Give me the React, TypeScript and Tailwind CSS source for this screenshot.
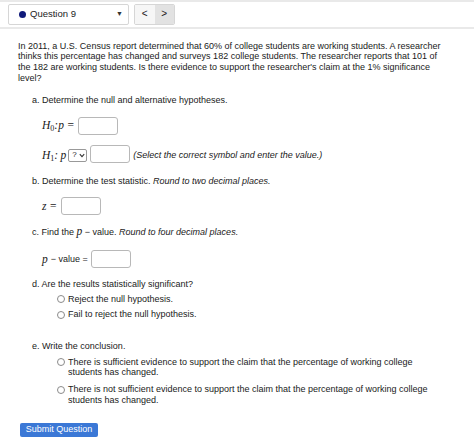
import React from "react";

const Box = () => (
  <span className="inline-block w-[40px] h-[18px] border border-[#b8b8b8] rounded-[3px] bg-white shrink-0" />
);

const Radio = () => (
  <span className="inline-block w-[8px] h-[8px] rounded-full border border-[#8a8a8a] bg-white shrink-0 mt-[1.5px]" />
);

const M = ({ children }: { children: React.ReactNode }) => (
  <span className="font-['Liberation_Serif',serif] italic text-[11.5px]">{children}</span>
);

export default function App() {
  return (
    <div className="w-[474px] h-[447px] bg-white text-[#1a1a1a] font-['Liberation_Sans',Arial,sans-serif] text-[9px] leading-[10.7px] overflow-hidden whitespace-nowrap">
      {/* header */}
      <div className="border-t-[2px] border-b-[2px] border-[#e9e9e9] h-[29px] flex items-start pt-[2px] gap-[5px] pl-[8px]">
        <div className="w-[121px] h-[21px] border border-[#d6d6d6] rounded-[2px] flex items-center pl-[10px] pr-[5px]">
          <span className="w-[7px] h-[7px] rounded-full bg-[#101a7a]" />
          <span className="ml-[4px] text-[9.5px] text-[#222]">Question 9</span>
          <span className="ml-auto text-[7px] text-[#333]">▼</span>
        </div>
        <div className="h-[21px] w-[41px] border border-[#d6d6d6] rounded-[2px] flex overflow-hidden">
          <div className="w-1/2 flex items-center justify-center bg-[#f6f6f6] text-[10px]">&lt;</div>
          <div className="w-1/2 flex items-center justify-center bg-[#e2e2e2] text-[10px]">&gt;</div>
        </div>
      </div>

      <div className="pl-[18px] pt-[11.5px]">
        <p>
          In 2011, a U.S. Census report determined that 60% of college students are working students. A researcher
          <br />
          thinks this percentage has changed and surveys 182 college students. The researcher reports that 101 of
          <br />
          the 182 are working students. Is there evidence to support the researcher's claim at the 1% significance
          <br />
          level?
        </p>

        <div className="pl-[14px] mt-[12px]">
          <div>a. Determine the null and alternative hypotheses.</div>
          <div className="pl-[10px] mt-[10.5px] h-[18px] flex items-center gap-[3px]">
            <M>
              H<sub className="text-[8px] not-italic">0</sub>:p =
            </M>
            <Box />
          </div>
          <div className="pl-[10px] mt-[12px] h-[18px] flex items-center gap-[2px]">
            <M>
              H<sub className="text-[8px] not-italic">1</sub>:&thinsp;p
            </M>
            <span className="inline-flex items-center h-[13px] w-[19px] border border-[#999] rounded-[2px] text-[8px] pl-[3px]">
              ?
              <svg width="6" height="5" viewBox="0 0 6 5" className="ml-[2px]">
                <path d="M0.8 1.2 L3 3.6 L5.2 1.2" fill="none" stroke="#333" strokeWidth="1.1" />
              </svg>
            </span>
            <span className="ml-[1px]">
              <Box />
            </span>
            <span className="italic ml-[1px]">(Select the correct symbol and enter the value.)</span>
          </div>
          <div className="mt-[11.5px]">
            b. Determine the test statistic. <i>Round to two decimal places.</i>
          </div>
          <div className="pl-[10px] mt-[10.5px] h-[18px] flex items-center gap-[4px]">
            <M>z =</M>
            <Box />
          </div>
          <div className="mt-[10.5px]">
            c. Find the <M>p</M> − value. <i>Round to four decimal places.</i>
          </div>
          <div className="pl-[10px] mt-[12.5px] h-[18px] flex items-center gap-[3px]">
            <M>p</M>
            <span> − value =</span>
            <Box />
          </div>
          <div className="mt-[11px]">d. Are the results statistically significant?</div>
          <div className="pl-[25px] mt-[4px] flex flex-col gap-[5px]">
            <div className="flex gap-[3px]">
              <Radio />
              <span>Reject the null hypothesis.</span>
            </div>
            <div className="flex gap-[3px]">
              <Radio />
              <span>Fail to reject the null hypothesis.</span>
            </div>
          </div>
          <div className="mt-[21px]">e. Write the conclusion.</div>
          <div className="pl-[25px] mt-[5px] flex flex-col gap-[6px]">
            <div className="flex gap-[3px]">
              <Radio />
              <span>
                There is sufficient evidence to support the claim that the percentage of working college
                <br />
                students has changed.
              </span>
            </div>
            <div className="flex gap-[3px]">
              <Radio />
              <span>
                There is not sufficient evidence to support the claim that the percentage of working college
                <br />
                students has changed.
              </span>
            </div>
          </div>
        </div>

        <button className="mt-[17px] ml-[2px] h-[14px] w-[78px] rounded-[2px] bg-[#3b78d6] text-white text-[9px] flex items-center justify-center">
          Submit Question
        </button>
      </div>
    </div>
  );
}
